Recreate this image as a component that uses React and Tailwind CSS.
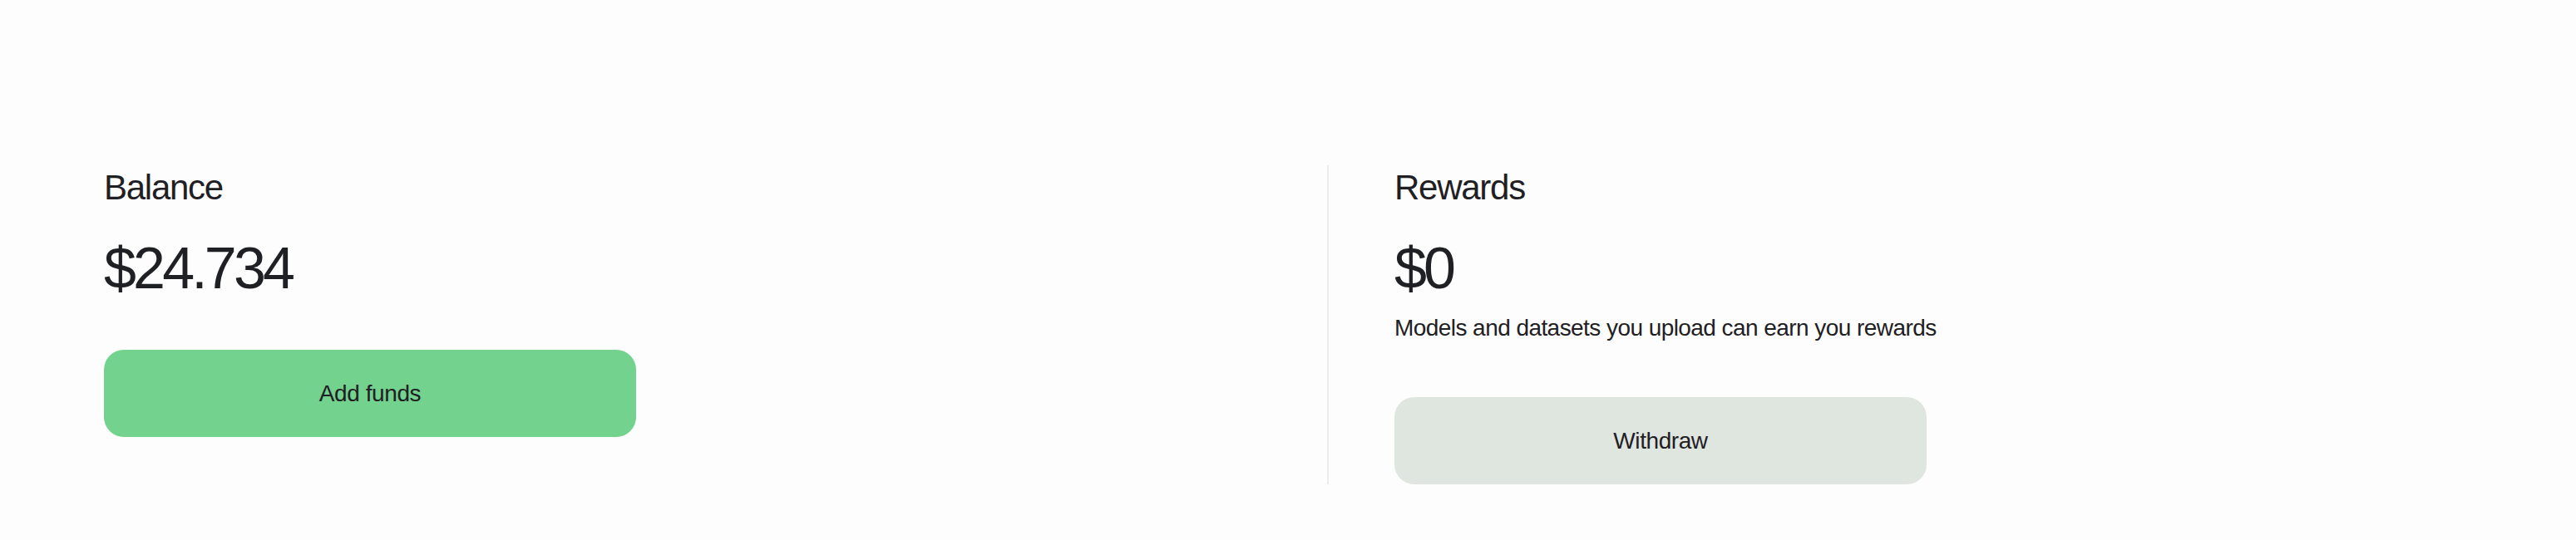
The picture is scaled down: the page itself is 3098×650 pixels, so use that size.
import React from "react";

const font = { fontFamily: '"Liberation Sans", Arial, sans-serif' };

function BalanceCard() {
  return (
    <div className="w-[1471px] shrink-0 flex flex-col">
      <h2 className="mt-[2px] text-[42px] leading-[1.2] tracking-[-0.03em] text-[#1f2023]">Balance</h2>
      <div className="mt-[37px] text-[70px] leading-none tracking-[-0.055em] text-[#1f2023]">$24.734</div>
      <button className="mt-[63px] w-[640px] h-[105px] rounded-[24px] bg-[#72d28e] text-[28px] tracking-[-0.015em] text-[#1f2023]">
        Add funds
      </button>
    </div>
  );
}

function RewardsCard() {
  return (
    <div className="flex flex-col border-l-2 border-[#ececec] pl-[79px]">
      <h2 className="mt-[2px] text-[42px] leading-[1.2] tracking-[-0.03em] text-[#1f2023]">Rewards</h2>
      <div className="mt-[37px] text-[70px] leading-none tracking-[-0.055em] text-[#1f2023]">$0</div>
      <p className="mt-[16px] text-[28px] leading-[1.5] tracking-[-0.02em] text-[#1f2023]">
        Models and datasets you upload can earn you rewards
      </p>
      <button className="mt-[62px] w-[640px] h-[105px] rounded-[24px] bg-[#dfe5df] text-[28px] tracking-[-0.015em] text-[#1f2023]">
        Withdraw
      </button>
    </div>
  );
}

export default function App() {
  return (
    <div style={font} className="w-[3098px] h-[650px] bg-[#fdfdfd] pt-[199px] pl-[125px]">
      {/* BALANCE + REWARDS */}
      <div className="flex items-stretch">
        <BalanceCard />
        <RewardsCard />
      </div>
    </div>
  );
}
